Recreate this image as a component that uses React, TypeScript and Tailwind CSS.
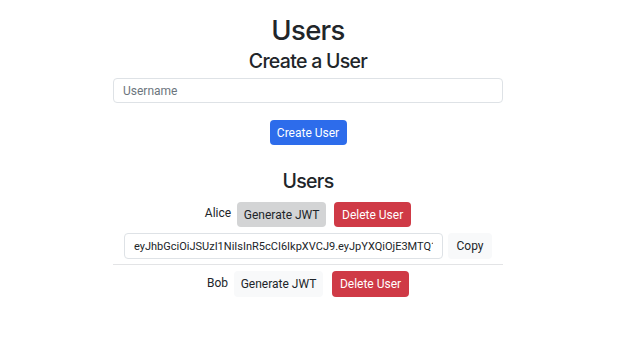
import { useState } from 'react';

const token =
  'eyJhbGciOiJSUzI1NiIsInR5cCI6IkpXVCJ9.eyJpYXQiOjE3MTQ1NjM0MDAsInN1YiI6ImFsaWNlIn0';

export default function App() {
  const [users] = useState([
    { name: 'Alice', jwt: token },
    { name: 'Bob', jwt: '' },
  ]);

  return (
    <div className="w-[616px] flex justify-center bg-white text-[#212529] font-['Roboto',sans-serif]">
      <div className="w-[390px] flex flex-col items-center">
        <h1 className="mt-[13px] text-[27.5px] leading-[34px] font-medium font-['Inter',sans-serif] tracking-[-0.7px]">Users</h1>
        <h2 className="mt-[2px] text-[19.5px] leading-[24px] font-medium font-['Inter',sans-serif] tracking-[-0.7px]">Create a User</h2>

        <input
          className="mt-[5px] w-full h-[25px] px-[9px] text-[12px] border border-[#dee2e6] rounded-[4px] placeholder:text-[#6c757d] outline-none"
          placeholder="Username"
        />

        <button className="mt-[17px] h-[25px] w-[77px] rounded-[4px] bg-[#2d6ceb] text-white text-[12px]">
          Create User
        </button>

        <h2 className="mt-[24px] text-[19.5px] leading-[24px] font-medium font-['Inter',sans-serif] tracking-[-0.7px]">Users</h2>

        <div className="mt-[9px] w-full flex flex-col items-center">
          {users.map((u, i) => (
            <div key={u.name} className="w-full flex flex-col items-center">
              {i > 0 && <div className="w-full h-px bg-[#e3e4e6] mt-[5px] mb-[6px]" />}
              <div className="flex items-center">
                <span className="text-[12px] -mt-[3px] mr-[6px]">{u.name}</span>
                <button
                  className={
                    u.jwt
                      ? 'h-[25px] w-[89px] rounded-[4px] bg-[#d3d4d5] text-[12px]'
                      : 'h-[26px] w-[89px] rounded-[4px] bg-[#f8f9fa] text-[12px]'
                  }
                >
                  Generate JWT
                </button>
                <button
                  className={
                    u.jwt
                      ? 'ml-[8px] h-[25px] w-[77px] rounded-[4px] bg-[#cf3a46] text-white text-[12px]'
                      : 'ml-[9px] h-[26px] w-[77px] rounded-[4px] bg-[#cf3a46] text-white text-[12px]'
                  }
                >
                  Delete User
                </button>
              </div>
              {u.jwt && (
                <div className="mt-[6px] flex items-center gap-[5px]">
                  <input
                    readOnly
                    value={u.jwt}
                    className="w-[319px] h-[26px] px-[9px] text-[11px] border border-[#dee2e6] rounded-[4px] outline-none"
                  />
                  <button className="h-[26px] w-[44px] rounded-[4px] bg-[#f8f9fa] text-[12px]">Copy</button>
                </div>
              )}
            </div>
          ))}
        </div>
      </div>
    </div>
  );
}
